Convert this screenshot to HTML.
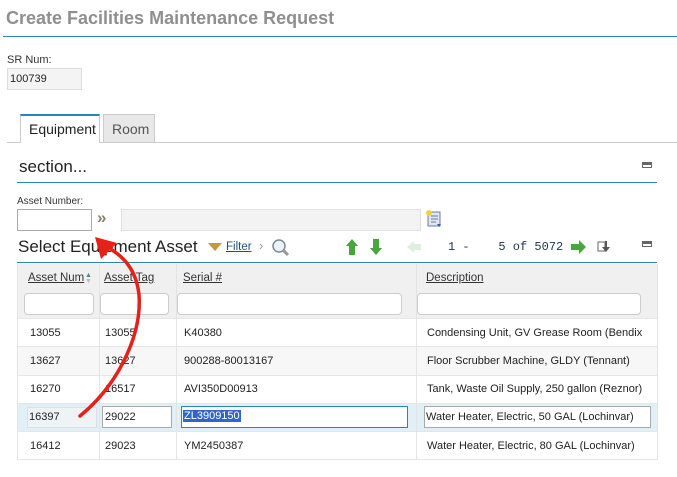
<!DOCTYPE html>
<html><head><style>
*{box-sizing:border-box}
body{margin:0;width:677px;height:477px;background:#fff;font-family:"Liberation Sans",Arial,sans-serif;position:relative;overflow:hidden;color:#222}
.a{position:absolute}
.inp{position:absolute;border:1px solid #ccc;border-radius:4px;background:#fff}
.hd{font-size:11.5px;color:#333;text-decoration:underline}
.c{position:absolute;font-size:11px;color:#222}
.vl{position:absolute;width:1px;background:#e4e4e4}
.hl{position:absolute;height:1px;background:#e6e6e6;left:17px;width:640px}
</style></head><body>
<div class="a" style="left:6px;top:8px;font-size:18px;font-weight:bold;color:#8f8f8f">Create Facilities Maintenance Request</div>
<div class="a" style="left:3px;top:36px;width:674px;height:1px;background:#2a86b3"></div>
<div class="a" style="left:7px;top:54px;font-size:11px;color:#333">SR Num:</div>
<div class="a" style="left:7px;top:68px;width:75px;height:22px;background:#f4f4f4;border:1px solid #ddd;font-size:11px;padding:4px 2px;color:#222">100739</div>
<div class="a" style="left:7px;top:142px;width:670px;height:1px;background:#ccc"></div>
<div class="a" style="left:20px;top:114px;width:80px;height:29px;background:#fff;border:1px solid #ccc;border-top:2px solid #2a86b3;border-bottom:none;font-size:14px;color:#222;padding:5px 0 0 8px">Equipment</div>
<div class="a" style="left:103px;top:114px;width:52px;height:28px;background:#e8e8e8;border:1px solid #ccc;border-bottom:none;font-size:14px;color:#555;padding:6px 0 0 8px">Room</div>
<div class="a" style="left:19px;top:157px;font-size:17px;color:#222">section...</div>
<div class="a" style="left:17px;top:182px;width:640px;height:1px;background:#2a86b3"></div>
<div class="a" style="left:642px;top:162px;width:10px;height:6px;border:1px solid #666;border-top:3px solid #666"></div>
<div class="a" style="left:17px;top:196px;font-size:10px;color:#333">Asset Number:</div>
<div class="a" style="left:17px;top:209px;width:75px;height:22px;border:1px solid #aaa;background:#fff"></div>
<div class="a" style="left:97px;top:208px;font-size:17px;color:#8a7f6a;font-weight:bold">»</div>
<div class="a" style="left:121px;top:209px;width:300px;height:22px;border:1px solid #e0e0e0;background:#f3f3f3"></div>
<svg class="a" style="left:425px;top:209px" width="18" height="20"><rect x="3" y="3" width="12" height="14" fill="#dde6f2" stroke="#6d7f99"/><path d="M6 7h7M6 10h7M6 13h5" stroke="#6d7f99"/><circle cx="4" cy="4" r="3" fill="#f4d33a"/><path d="M12 15l2 3 2-3z" fill="#3a5ab0"/></svg>
<div class="a" style="left:18px;top:237px;font-size:17px;color:#222">Select Equipment Asset</div>
<svg class="a" style="left:207px;top:242px" width="16" height="10"><path d="M1 1h14l-7 8z" fill="#c9963a"/></svg>
<div class="a" style="left:226px;top:241px;font-size:11.5px;color:#1f4f7f;text-decoration:underline">Filter</div>
<div class="a" style="left:259px;top:238px;font-size:13px;color:#999">›</div>
<svg class="a" style="left:271px;top:238px" width="20" height="20"><circle cx="8" cy="8" r="6" fill="#eef3f7" stroke="#7a8a99" stroke-width="1.5"/><path d="M12 12l5 5" stroke="#999" stroke-width="3"/></svg>
<svg class="a" style="left:345px;top:238px" width="40" height="18"><path d="M7 1l6 7h-3v9h-6v-9h-3z" fill="#46a73a"/><path d="M31 17l6-7h-3v-9h-6v9h-3z" fill="#46a73a"/></svg>
<svg class="a" style="left:406px;top:240px" width="16" height="14"><path d="M1 7l7-6v3h7v6h-7v3z" fill="#dfeee0"/></svg>
<div class="a" style="left:448px;top:240px;font-family:'Liberation Mono',monospace;font-size:12px;color:#1c3553;white-space:pre">1 -    5 of 5072</div>
<svg class="a" style="left:570px;top:239px" width="17" height="16"><path d="M1 5h8v-4l7 7-7 7v-4h-8z" fill="#46a73a"/></svg>
<svg class="a" style="left:597px;top:240px" width="14" height="13"><rect x="1" y="2" width="7" height="9" fill="none" stroke="#666"/><path d="M8 1v6h-3l4 5 4-5h-3v-6z" fill="#555"/></svg>
<div class="a" style="left:642px;top:241px;width:10px;height:6px;border:1px solid #666;border-top:3px solid #666"></div>
<div class="a" style="left:17px;top:262px;width:640px;height:1px;background:#2a86b3"></div>
<div class="a" style="left:17px;top:264px;width:640px;height:54px;background:#f0f0f0"></div>
<div class="a hd" style="left:28px;top:272px">Asset Num</div>
<div class="a" style="left:85px;top:273px;font-size:7px;color:#3a8f8f;line-height:6px">▲<br><span style="color:#bbb">▼</span></div>
<div class="a hd" style="left:104px;top:272px">Asset Tag</div>
<div class="a hd" style="left:183px;top:272px">Serial #</div>
<div class="a hd" style="left:426px;top:272px">Description</div>
<div class="inp" style="left:24px;top:293px;width:70px;height:22px"></div>
<div class="inp" style="left:100px;top:293px;width:69px;height:22px"></div>
<div class="inp" style="left:177px;top:293px;width:225px;height:22px"></div>
<div class="inp" style="left:417px;top:293px;width:224px;height:22px"></div>
<div class="a" style="left:17px;top:346px;width:640px;height:29px;background:#f7f7f7"></div>
<div class="a" style="left:17px;top:403px;width:640px;height:28px;background:#e1f0f7"></div>
<div class="hl" style="top:318px"></div><div class="hl" style="top:346px"></div><div class="hl" style="top:375px"></div><div class="hl" style="top:403px"></div><div class="hl" style="top:431px"></div><div class="hl" style="top:459px"></div>
<div class="vl" style="left:17px;top:264px;height:196px"></div>
<div class="vl" style="left:99px;top:264px;height:196px"></div>
<div class="vl" style="left:176px;top:264px;height:196px"></div>
<div class="vl" style="left:416px;top:264px;height:196px"></div>
<div class="vl" style="left:657px;top:264px;height:196px"></div>
<div class="c" style="left:30px;top:327px">13055</div><div class="c" style="left:105px;top:327px">13055</div><div class="c" style="left:184px;top:327px">K40380</div><div class="c" style="left:427px;top:327px">Condensing Unit, GV Grease Room (Bendix</div>
<div class="c" style="left:30px;top:355px">13627</div><div class="c" style="left:105px;top:355px">13627</div><div class="c" style="left:184px;top:355px">900288-80013167</div><div class="c" style="left:427px;top:355px">Floor Scrubber Machine, GLDY (Tennant)</div>
<div class="c" style="left:30px;top:383px">16270</div><div class="c" style="left:105px;top:383px">16517</div><div class="c" style="left:184px;top:383px">AVI350D00913</div><div class="c" style="left:427px;top:383px">Tank, Waste Oil Supply, 250 gallon (Reznor)</div>
<div class="a" style="left:27px;top:407px;width:70px;height:21px;background:#eef3f5;border:1px solid #dde"></div>
<div class="c" style="left:29px;top:411px">16397</div>
<div class="a" style="left:102px;top:406px;width:70px;height:22px;border:1px solid #aaa;background:#fff"></div>
<div class="c" style="left:105px;top:411px">29022</div>
<div class="a" style="left:181px;top:406px;width:227px;height:22px;border:1px solid #2a86b3;background:#fff"></div>
<div class="c" style="left:183px;top:410px;background:#3166c8;color:#fff;padding:0 1px">ZL3909150</div>
<div class="a" style="left:424px;top:406px;width:227px;height:22px;border:1px solid #aaa;background:#fff"></div>
<div class="c" style="left:426px;top:411px">Water Heater, Electric, 50 GAL (Lochinvar)</div>
<div class="c" style="left:30px;top:440px">16412</div><div class="c" style="left:105px;top:440px">29023</div><div class="c" style="left:184px;top:440px">YM2450387</div><div class="c" style="left:427px;top:440px">Water Heater, Electric, 80 GAL (Lochinvar)</div>
<svg class="a" style="left:0;top:0" width="677" height="477"><path d="M80 416 C118 385 142 335 139 295 C137 275 128 260 112 250" fill="none" stroke="#e8201a" stroke-width="3.5" stroke-linecap="round"/><path d="M95 237 L117 243 L101 259 Z" fill="#e8201a"/></svg>
</body></html>
